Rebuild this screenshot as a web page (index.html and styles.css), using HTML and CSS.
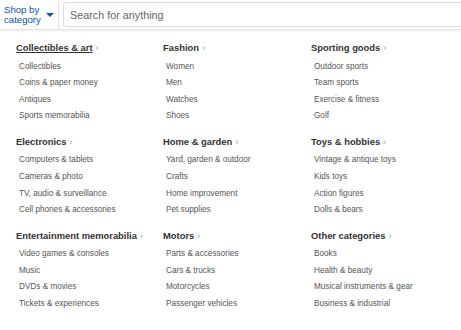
FILE: index.html
```html
<!DOCTYPE html>
<html lang="en">
<head>
  <meta charset="UTF-8" />
  <title>Shop by category</title>
  <link rel="stylesheet" href="styles.css">
</head>
<body>
  <div class="topbar">
    <button class="shop-btn">
      <span class="shop-label">Shop by<br>category</span>
      <span class="caret"></span>
    </button>
    <div class="search-box">
      <input type="text" class="search-input" placeholder="Search for anything">
    </div>
  </div>

  <div class="menu">
    <div class="cat-group">
      <a class="cat-title hover" href="#">Collectibles &amp; art</a><span class="chev">›</span>
      <ul class="cat-list">
        <li>Collectibles</li>
        <li>Coins &amp; paper money</li>
        <li>Antiques</li>
        <li>Sports memorabilia</li>
      </ul>
    </div>
    <div class="cat-group">
      <a class="cat-title" href="#">Fashion</a><span class="chev">›</span>
      <ul class="cat-list">
        <li>Women</li>
        <li>Men</li>
        <li>Watches</li>
        <li>Shoes</li>
      </ul>
    </div>
    <div class="cat-group">
      <a class="cat-title" href="#">Sporting goods</a><span class="chev">›</span>
      <ul class="cat-list">
        <li>Outdoor sports</li>
        <li>Team sports</li>
        <li>Exercise &amp; fitness</li>
        <li>Golf</li>
      </ul>
    </div>

    <div class="cat-group">
      <a class="cat-title" href="#">Electronics</a><span class="chev">›</span>
      <ul class="cat-list">
        <li>Computers &amp; tablets</li>
        <li>Cameras &amp; photo</li>
        <li>TV, audio &amp; surveillance</li>
        <li>Cell phones &amp; accessories</li>
      </ul>
    </div>
    <div class="cat-group">
      <a class="cat-title" href="#">Home &amp; garden</a><span class="chev">›</span>
      <ul class="cat-list">
        <li>Yard, garden &amp; outdoor</li>
        <li>Crafts</li>
        <li>Home improvement</li>
        <li>Pet supplies</li>
      </ul>
    </div>
    <div class="cat-group">
      <a class="cat-title" href="#">Toys &amp; hobbies</a><span class="chev">›</span>
      <ul class="cat-list">
        <li>Vintage &amp; antique toys</li>
        <li>Kids toys</li>
        <li>Action figures</li>
        <li>Dolls &amp; bears</li>
      </ul>
    </div>

    <div class="cat-group">
      <a class="cat-title" href="#">Entertainment memorabilia</a><span class="chev">›</span>
      <ul class="cat-list">
        <li>Video games &amp; consoles</li>
        <li>Music</li>
        <li>DVDs &amp; movies</li>
        <li>Tickets &amp; experiences</li>
      </ul>
    </div>
    <div class="cat-group">
      <a class="cat-title" href="#">Motors</a><span class="chev">›</span>
      <ul class="cat-list">
        <li>Parts &amp; accessories</li>
        <li>Cars &amp; trucks</li>
        <li>Motorcycles</li>
        <li>Passenger vehicles</li>
      </ul>
    </div>
    <div class="cat-group">
      <a class="cat-title" href="#">Other categories</a><span class="chev">›</span>
      <ul class="cat-list">
        <li>Books</li>
        <li>Health &amp; beauty</li>
        <li>Musical instruments &amp; gear</li>
        <li>Business &amp; industrial</li>
      </ul>
    </div>
  </div>
</body>
</html>
```

FILE: styles.css
```css
* {
  box-sizing: border-box;
  margin: 0;
  padding: 0;
}

body {
  font-family: "Liberation Sans", Arial, sans-serif;
  background: #fff;
  color: #333;
  width: 461px;
  height: 330px;
  overflow: hidden;
}

.topbar {
  display: flex;
  align-items: stretch;
  height: 30px;
  border-bottom: 1px solid #e5e5e5;
  box-shadow: 0 1px 2px rgba(0, 0, 0, 0.07);
}

.shop-btn {
  display: flex;
  align-items: center;
  gap: 5px;
  width: 59px;
  padding-left: 4px;
  background: #fff;
  border: none;
  border-right: 1px solid #e3e3e3;
  color: #0654ba;
  font-family: inherit;
  font-size: 9.6px;
  line-height: 10px;
  text-align: left;
  cursor: pointer;
}

.caret {
  width: 0;
  height: 0;
  border-left: 4px solid transparent;
  border-right: 4px solid transparent;
  border-top: 4px solid #0654ba;
  margin-top: 1px;
}

.search-box {
  flex: 1;
  padding: 2px 0 2px 4px;
}

.search-input {
  width: 100%;
  height: 100%;
  border: 1px solid #ddd;
  border-right: none;
  border-radius: 3px 0 0 3px;
  padding-left: 6px;
  font-family: inherit;
  font-size: 10.8px;
  color: #333;
  outline: none;
}

.search-input::placeholder {
  color: #666;
}

.menu {
  display: grid;
  grid-template-columns: 147px 148px 150px;
  padding: 12px 0 0 16px;
  row-gap: 11px;
}

.cat-group {
  line-height: 12px;
  font-size: 9.4px;
}

.cat-title {
  font-size: 9.4px;
  font-weight: bold;
  color: #333;
  text-decoration: none;
}

.cat-title.hover {
  text-decoration: underline;
}

.chev {
  font-size: 9px;
  color: #999;
  margin-left: 3px;
}

.cat-list {
  list-style: none;
  padding: 4.5px 0 0 3px;
}

.cat-list li {
  font-size: 8.2px;
  color: #555;
  line-height: 16.6px;
}
```
